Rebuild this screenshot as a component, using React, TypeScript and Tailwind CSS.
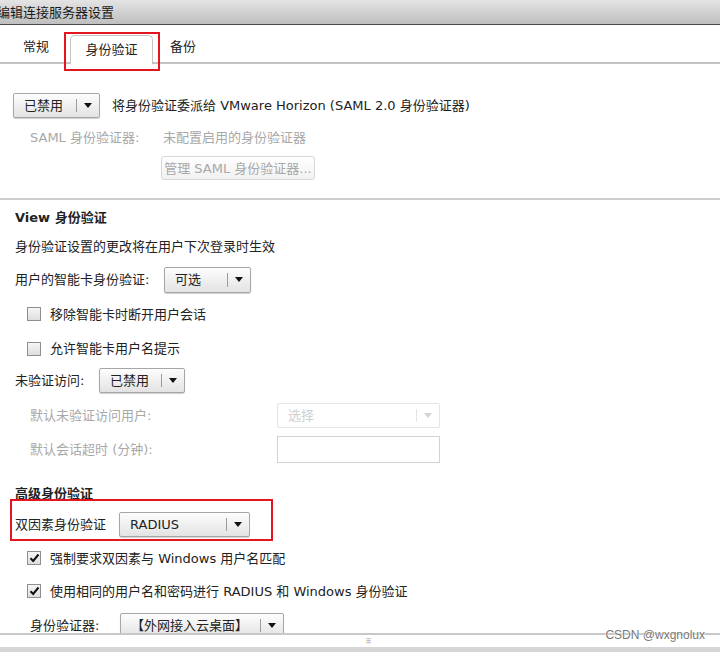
const font = "font-['DejaVu_Sans','Noto_Sans_CJK_SC',sans-serif]";

function Arrow({ light }: { light?: boolean }) {
  return (
    <svg width="8" height="5" viewBox="0 0 8 5">
      <path d="M0 0H8L4 5Z" fill={light ? "#d4d4d4" : "#111"} />
    </svg>
  );
}

function Select({ value, className }: { value: string; className: string }) {
  return (
    <div className={`flex items-stretch rounded-[2px] border border-[#a6a6a6] bg-linear-to-b from-[#fdfdfd] to-[#e3e3e3] shadow-[0_1px_1px_#d0d0d0] ${className}`}>
      <span className="flex flex-1 items-center pl-[10px] text-[#222]">{value}</span>
      <span className="my-[5px] w-px bg-[#9c9c9c]" />
      <span className="flex w-[22px] items-center justify-center">
        <Arrow />
      </span>
    </div>
  );
}

function Check({ checked, label }: { checked?: boolean; label: string }) {
  return (
    <div className="flex h-full items-center pl-[27px]">
      <span className="flex h-[14px] w-[14px] items-center justify-center border border-[#8e8e8e] bg-linear-to-b from-[#f6f6f6] to-[#dedede]">
        {checked && (
          <svg width="11" height="10" viewBox="0 0 11 10">
            <path d="M1.5 5.2L4.2 8L9.5 1.5" stroke="#111" strokeWidth="2" fill="none" />
          </svg>
        )}
      </span>
      <span className="ml-[9px] text-[#222]">{label}</span>
    </div>
  );
}

export default function App() {
  return (
    <div className={`relative flex h-[652px] w-[720px] flex-col overflow-hidden bg-white text-[13px] leading-none text-[#222] ${font}`}>
      <div className="flex h-[25px] shrink-0 items-center border-b border-[#4a4a4a] bg-linear-to-b from-[#e4e4e4] to-[#bfbfbf]">
        <span className="-ml-[3px] text-[#1a1a1a]">编辑连接服务器设置</span>
      </div>

      <div className="flex h-[39px] shrink-0 items-end border-b-2 border-[#c4c4c4]">
        <span className="mb-[9px] ml-[23px] text-[#222]">常规</span>
        <div className="-mb-[2px] ml-[21px] flex h-[29px] w-[83px] items-center justify-center rounded-t-[5px] border border-b-0 border-[#c4c4c4] bg-white pb-[2px]">
          身份验证
        </div>
        <span className="mb-[9px] ml-[17px] text-[#222]">备份</span>
      </div>

      <div className="h-[569px] shrink-0 overflow-hidden">
        <div className="mt-[29px] flex h-[25px] items-center pl-[13px]">
          <Select value="已禁用" className="h-[25px] w-[87px]" />
          <span className="ml-[12px]">将身份验证委派给 VMware Horizon (SAML 2.0 身份验证器)</span>
        </div>
        <div className="flex h-[38px] items-center pl-[30px] text-[#a8a8a8]">
          <span className="w-[133px]">SAML 身份验证器:</span>
          <span>未配置启用的身份验证器</span>
        </div>
        <div className="flex h-[24px] pl-[161px]">
          <div className="flex w-[154px] items-center justify-center rounded-[3px] border border-[#d6d6d6] bg-linear-to-b from-white to-[#f1f1f1] text-[#a8a8a8]">
            管理 SAML 身份验证器...
          </div>
        </div>
        <div className="mt-[18px] h-[2px] bg-[#cdcdcd]" />

        <div className="flex h-[35px] items-center pl-[15px] font-bold">View 身份验证</div>
        <div className="flex h-[22px] items-center pl-[15px]">身份验证设置的更改将在用户下次登录时生效</div>
        <div className="flex h-[45px] items-center pl-[15px]">
          <span className="w-[149px]">用户的智能卡身份验证:</span>
          <Select value="可选" className="h-[26px] w-[87px]" />
        </div>
        <div className="h-[24px]">
          <Check label="移除智能卡时断开用户会话" />
        </div>
        <div className="h-[44px] pt-[1px]">
          <Check label="允许智能卡用户名提示" />
        </div>
        <div className="-mt-[2px] flex h-[25px] items-center pl-[15px]">
          <span className="w-[84px]">未验证访问:</span>
          <Select value="已禁用" className="h-[25px] w-[86px]" />
        </div>
        <div className="mt-[10px] flex h-[25px] items-center pl-[30px] text-[#a8a8a8]">
          <span className="w-[247px]">默认未验证访问用户:</span>
          <div className="flex h-[25px] w-[163px] items-stretch rounded-[2px] border border-[#e4e4e4]">
            <span className="flex flex-1 items-center pl-[10px] text-[#cfcfcf]">选择</span>
            <span className="my-[5px] w-px bg-[#e4e4e4]" />
            <span className="flex w-[22px] items-center justify-center">
              <Arrow light />
            </span>
          </div>
        </div>
        <div className="mt-[8px] flex h-[27px] items-center pl-[30px] text-[#a8a8a8]">
          <span className="w-[247px]">默认会话超时 (分钟):</span>
          <div className="h-[27px] w-[163px] border border-[#d2d2d2] bg-white" />
        </div>

        <div className="mt-[17px] flex h-[26px] items-center pl-[15px] font-bold text-[#222]">高级身份验证</div>
        <div className="mt-[6px] flex h-[25px] items-center pl-[15px]">
          <span className="w-[104px]">双因素身份验证</span>
          <Select value="RADIUS" className="h-[25px] w-[131px]" />
        </div>
        <div className="mt-[9px] h-[24px]">
          <Check checked label="强制要求双因素与 Windows 用户名匹配" />
        </div>
        <div className="mt-[9px] h-[24px]">
          <Check checked label="使用相同的用户名和密码进行 RADIUS 和 Windows 身份验证" />
        </div>
        <div className="mt-[10px] flex h-[25px] items-center pl-[30px]">
          <span className="w-[90px]">身份验证器:</span>
          <Select value="【外网接入云桌面】" className="h-[25px] w-[164px]" />
        </div>
      </div>

      <div className="flex h-[19px] shrink-0 flex-col border-t-2 border-[#c8c8c8]">
        <div className="flex h-[12px] items-center justify-center pl-[16px] text-[8px] tracking-[-1px] text-[#999]">⁝⁝⁝</div>
        <div className="flex-1 bg-[#d6d6d6]" />
      </div>

      <div className="pointer-events-none absolute left-[64px] top-[32px] h-[39px] w-[96px] border-2 border-[#e3151e]" />
      <div className="pointer-events-none absolute left-[10px] top-[499px] h-[42px] w-[263px] border-2 border-[#e3151e]" />
      <span className="absolute right-[15px] top-[629px] font-['Liberation_Sans',sans-serif] text-[12px] text-[#7a7a7a] [text-shadow:0_0_2px_#fff,0_0_2px_#fff]">CSDN @wxgnolux</span>
    </div>
  );
}
